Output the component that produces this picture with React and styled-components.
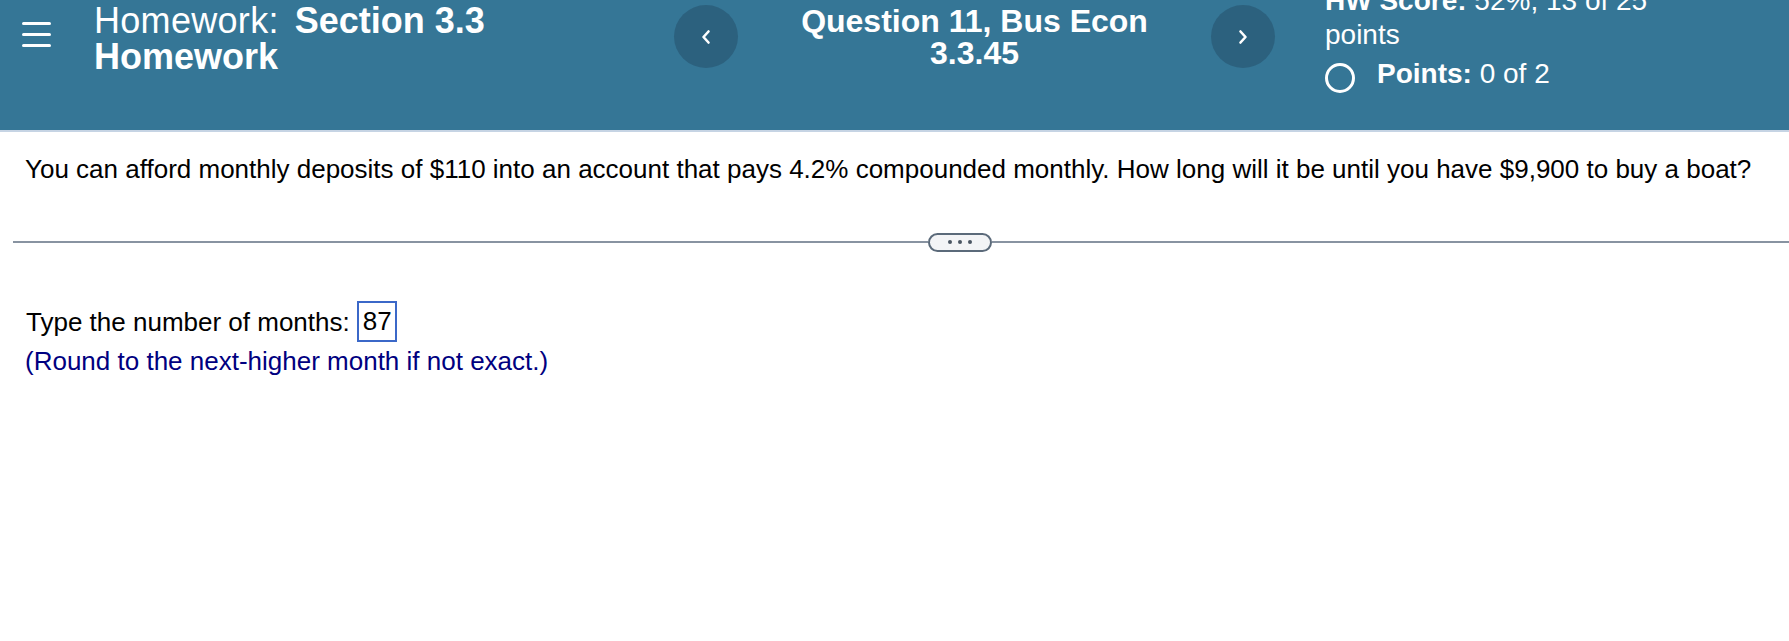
import React from "react"
import styled, { createGlobalStyle } from "styled-components"

const GlobalStyle = createGlobalStyle`
  html, body {
    margin: 0;
    padding: 0;
    background: #ffffff;
    font-family: "Liberation Sans", Arial, Helvetica, sans-serif;
    color: #000000;
    overflow: hidden;
  }
`

const Page = styled.div`
  width: 100%;
  min-height: 641px;
`

const Header = styled.header`
  display: flex;
  align-items: flex-start;
  height: 130px;
  padding-left: 22px;
  background: #357696;
  border-bottom: 2px solid #c6d4e4;
  color: #ffffff;
  overflow: hidden;
`

const MenuButton = styled.div`
  display: flex;
  flex-direction: column;
  gap: 8px;
  width: 29px;
  margin-top: 22px;
  cursor: pointer;
`

const MenuLine = styled.span`
  display: block;
  height: 3px;
  border-radius: 2px;
  background: #ffffff;
`

const Title = styled.h1`
  width: 440px;
  margin: 3px 140px 0 43px;
  font-size: 36px;
  line-height: 36px;
  font-weight: 400;
`

const Light = styled.span`
  letter-spacing: 0.3px;
`

const Strong = styled.b`
  font-weight: 700;
  margin-left: ${(p) => (p.gap ? "16px" : "0")};
`

const NavButton = styled.button`
  flex: none;
  display: flex;
  align-items: center;
  justify-content: center;
  width: 64px;
  height: 63px;
  margin-top: 5px;
  padding: 0;
  border: none;
  border-radius: 50%;
  background: #2c617e;
  cursor: pointer;
`

const QuestionTitle = styled.h2`
  flex: 0 0 473px;
  margin: 5px 0 0;
  text-align: center;
  font-size: 32px;
  line-height: 32px;
  font-weight: 700;
`

const Score = styled.div`
  width: 390px;
  margin: -16px 0 0 50px;
  font-size: 28px;
  line-height: 34px;
`

const PointsRow = styled.div`
  display: flex;
  align-items: flex-start;
  margin-top: 5px;
`

const Ring = styled.span`
  flex: none;
  box-sizing: border-box;
  width: 30px;
  height: 30px;
  margin: 6px 22px 0 0;
  border: 3px solid #ffffff;
  border-radius: 50%;
`

const Main = styled.main`
  padding-top: 21px;
`

const Question = styled.p`
  margin: 0 0 47px;
  padding-left: 25px;
  font-size: 26px;
  line-height: 32px;
`

const Divider = styled.div`
  display: flex;
  align-items: center;
  height: 20px;
  padding-left: 13px;
`

const Rule = styled.span`
  display: block;
  height: 2px;
  background: #8893a1;
  flex: ${(p) => (p.grow ? "1" : `0 0 ${p.width}px`)};
`

const MorePill = styled.button`
  flex: none;
  display: flex;
  align-items: center;
  justify-content: center;
  gap: 6px;
  box-sizing: border-box;
  width: 64px;
  height: 19px;
  padding: 0;
  border: 2px solid #5b6a7a;
  border-radius: 10px;
  background: #f3f4f6;
`

const Dot = styled.span`
  width: 4px;
  height: 4px;
  border-radius: 50%;
  background: #4b5563;
`

const AnswerRow = styled.div`
  display: flex;
  align-items: center;
  height: 41px;
  margin-top: 49px;
  padding-left: 26px;
  font-size: 26px;
  line-height: 32px;
`

const AnswerBox = styled.span`
  box-sizing: border-box;
  width: 40px;
  height: 41px;
  margin-left: 7px;
  padding: 0 0 0 4px;
  border: 2px solid #3b68c8;
  line-height: 37px;
`

const Hint = styled.p`
  margin: 3px 0 0;
  padding-left: 25px;
  font-size: 26px;
  line-height: 32px;
  color: #000080;
`

const Chevron = ({ dir }) => (
  <svg width="12" height="16" viewBox="0 0 12 16">
    <polyline
      points={dir === "left" ? "8.5,2.5 3.5,8 8.5,13.5" : "3.5,2.5 8.5,8 3.5,13.5"}
      fill="none"
      stroke="#ffffff"
      strokeWidth="2.6"
      strokeLinecap="round"
      strokeLinejoin="round"
    />
  </svg>
)

const App = () => {
  return (
    <Page>
      <GlobalStyle />
      <Header>
        <MenuButton>
          <MenuLine />
          <MenuLine />
          <MenuLine />
        </MenuButton>
        <Title>
          <Light>Homework:</Light>
          <Strong gap>Section 3.3 Homework</Strong>
        </Title>
        <NavButton aria-label="Previous question">
          <Chevron dir="left" />
        </NavButton>
        <QuestionTitle>
          Question 11, Bus Econ
          <br />
          3.3.45
        </QuestionTitle>
        <NavButton aria-label="Next question">
          <Chevron dir="right" />
        </NavButton>
        <Score>
          <div>
            <Strong>HW Score:</Strong> 52%, 13 of 25 points
          </div>
          <PointsRow>
            <Ring />
            <span>
              <Strong>Points:</Strong> 0 of 2
            </span>
          </PointsRow>
        </Score>
      </Header>

      <Main>
        <Question>
          You can afford monthly deposits of $110 into an account that pays
          4.2% compounded monthly. How long will it be until you have $9,900 to
          buy a boat?
        </Question>

        <Divider>
          <Rule width={915} />
          <MorePill aria-label="More">
            <Dot />
            <Dot />
            <Dot />
          </MorePill>
          <Rule grow />
        </Divider>

        <AnswerRow>
          Type the number of months:
          <AnswerBox>87</AnswerBox>
        </AnswerRow>
        <Hint>(Round to the next-higher month if not exact.)</Hint>
      </Main>
    </Page>
  )
}

export default App
